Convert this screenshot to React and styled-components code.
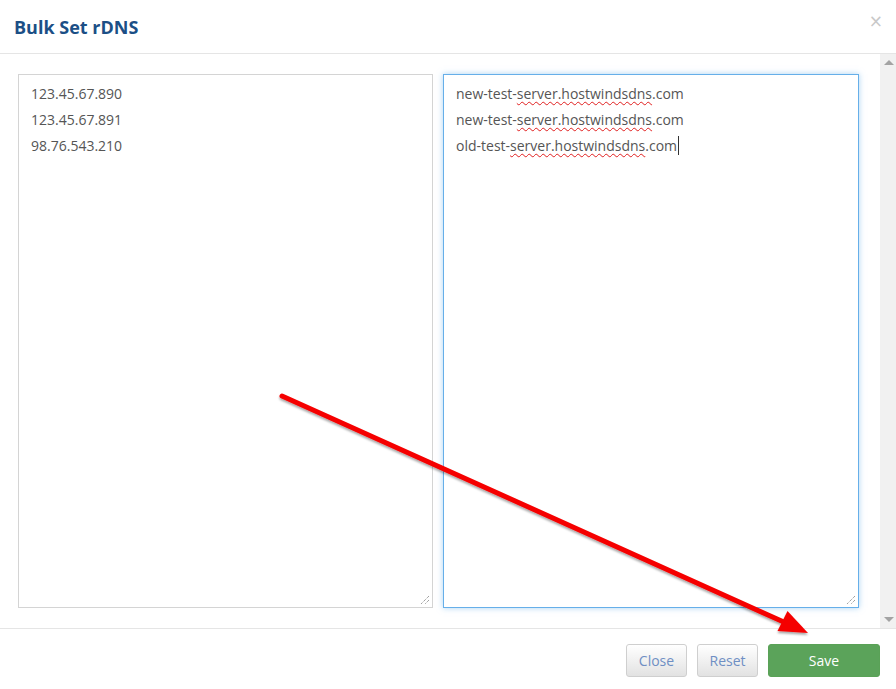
import React from 'react';
import styled, { createGlobalStyle } from 'styled-components';

const GlobalStyle = createGlobalStyle`
  html, body {
    margin: 0;
    padding: 0;
    background: #fff;
    font-family: "Open Sans", "Liberation Sans", sans-serif;
  }
`;

const Modal = styled.div`
  position: relative;
  width: 896px;
  height: 689px;
  overflow: hidden;
  background: #fff;
  display: flex;
  flex-direction: column;
`;

const Header = styled.div`
  height: 54px;
  box-sizing: border-box;
  border-bottom: 1px solid #e5e5e5;
  padding: 0 14px;
  display: flex;
  align-items: center;
  justify-content: space-between;
  flex: none;
`;

const Title = styled.h4`
  margin: 0;
  font-size: 18px;
  font-weight: 700;
  color: #1b4f86;
`;

const CloseX = styled.button`
  border: none;
  background: none;
  padding: 0;
  margin-right: -1px;
  margin-top: -10px;
  font-family: "DejaVu Sans", sans-serif;
  font-size: 17px;
  line-height: 1;
  color: #c8c8c8;
  cursor: pointer;
`;

const Body = styled.div`
  height: 574px;
  flex: none;
  display: flex;
  overflow: hidden;
`;

const Columns = styled.div`
  flex: 1;
  display: grid;
  grid-template-columns: 415px 416px;
  align-content: start;
  column-gap: 10px;
  padding: 20px 21px 20px 18px;
`;

const ScrollTrack = styled.div`
  width: 17px;
  flex: none;
  background: #f1f1f1;
  display: flex;
  flex-direction: column;
  justify-content: space-between;
  align-items: center;
  padding: 6px 0;
  box-sizing: border-box;
`;

const ScrollArrow = styled.span`
  width: 0;
  height: 0;
  border-left: 5px solid transparent;
  border-right: 5px solid transparent;
  ${p => (p.$down ? 'border-top: 5px solid #a3a3a3;' : 'border-bottom: 5px solid #a3a3a3;')}
`;

const Field = styled.div`
  position: relative;
  height: 534px;
  box-sizing: border-box;
  padding: 6px 12px;
  font-size: 14px;
  line-height: 26px;
  color: #555;
  background: #fff;
  border: 1px solid ${p => (p.$focused ? '#66afe9' : '#d4d4d4')};
  box-shadow: ${p => (p.$focused ? '0 0 6px rgba(102, 175, 233, 0.55)' : 'none')};
`;

const Line = styled.div`
  white-space: nowrap;
`;

const Misspelled = styled.span`
  text-decoration: underline wavy #e01e1e;
  text-decoration-thickness: 1px;
  text-underline-offset: 2px;
  text-decoration-skip-ink: none;
`;

const Caret = styled.span`
  display: inline-block;
  width: 1px;
  height: 19px;
  margin-left: 1px;
  vertical-align: -4px;
  background: #333;
`;

const Grip = styled.svg`
  position: absolute;
  right: 2px;
  bottom: 2px;
`;

const Footer = styled.div`
  flex: 1;
  border-top: 1px solid #e5e5e5;
  padding: 15px 16px 0 0;
  display: flex;
  justify-content: flex-end;
  align-items: flex-start;
  gap: 10px;
`;

const Button = styled.button`
  height: 33px;
  width: ${p => p.$width}px;
  box-sizing: border-box;
  border-radius: 3px;
  font-family: inherit;
  font-size: 14px;
  cursor: pointer;
  border: 1px solid ${p => (p.$primary ? '#5aa257' : '#cfcfcf')};
  color: ${p => (p.$primary ? '#fff' : '#6f8fc4')};
  background: ${p =>
    p.$primary ? '#5ba35a' : 'linear-gradient(to bottom, #ffffff 0%, #e2e2e2 100%)'};
`;

const ArrowLayer = styled.svg`
  position: absolute;
  left: 0;
  top: 0;
  pointer-events: none;
`;

const ResizeGrip = () => (
  <Grip width="10" height="10" viewBox="0 0 10 10">
    <path d="M9 1 L1 9 M9 5 L5 9" stroke="#777" strokeWidth="1" strokeDasharray="1 1" />
  </Grip>
);

const HostLine = ({ prefix, caret }) => (
  <Line>
    {prefix}-test-<Misspelled>server.hostwindsdns</Misspelled>.com
    {caret && <Caret />}
  </Line>
);

const App = () => (
  <>
    <GlobalStyle />
    <Modal>
      <Header>
        <Title>Bulk Set rDNS</Title>
        <CloseX aria-label="Close">×</CloseX>
      </Header>
      <Body>
        <Columns>
          <Field>
            <Line>123.45.67.890</Line>
            <Line>123.45.67.891</Line>
            <Line>98.76.543.210</Line>
            <ResizeGrip />
          </Field>
          <Field $focused>
            <HostLine prefix="new" />
            <HostLine prefix="new" />
            <HostLine prefix="old" caret />
            <ResizeGrip />
          </Field>
        </Columns>
        <ScrollTrack>
          <ScrollArrow />
          <ScrollArrow $down />
        </ScrollTrack>
      </Body>
      <Footer>
        <Button $width={61}>Close</Button>
        <Button $width={61}>Reset</Button>
        <Button $width={112} $primary>Save</Button>
      </Footer>
      <ArrowLayer width="896" height="689">
        <defs>
          <filter id="arrowShadow" x="-10%" y="-10%" width="120%" height="130%">
            <feDropShadow dx="0" dy="2" stdDeviation="1" floodColor="#000" floodOpacity="0.35" />
          </filter>
        </defs>
        <g filter="url(#arrowShadow)">
          <line x1="282" y1="396" x2="786" y2="623" stroke="#f50000" strokeWidth="5" strokeLinecap="round" />
          <polygon points="808,633 777.5,631 787.5,611" fill="#f50000" />
        </g>
      </ArrowLayer>
    </Modal>
  </>
);

export default App;
